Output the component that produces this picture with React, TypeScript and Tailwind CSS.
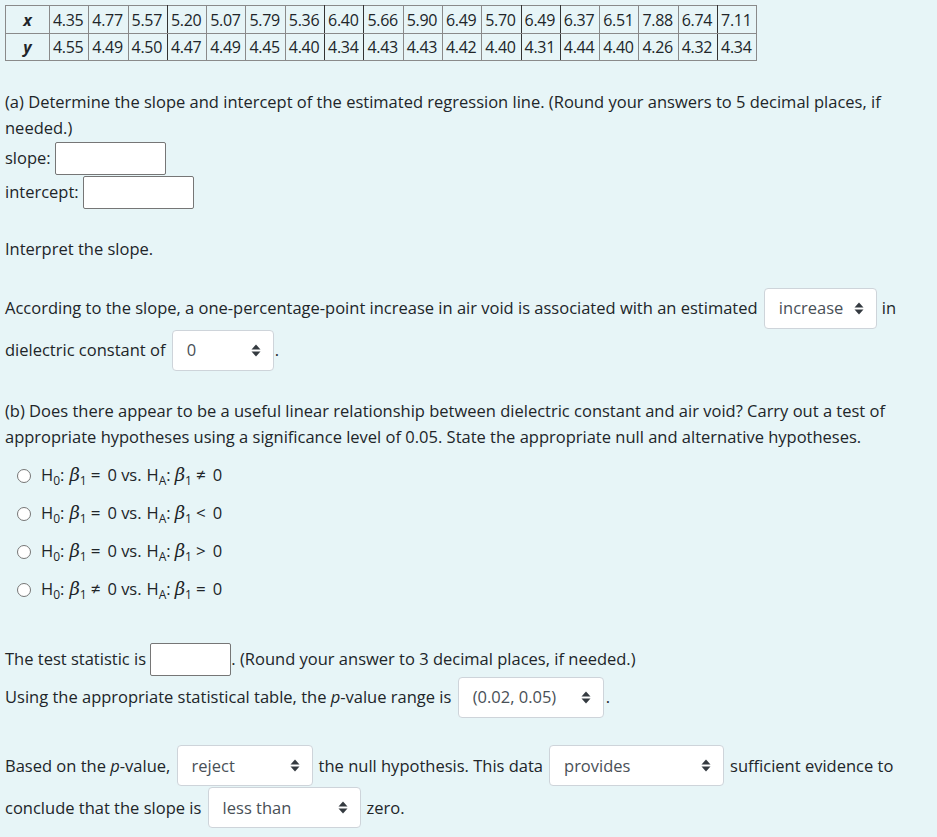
import React from "react";

const xs = ["4.35","4.77","5.57","5.20","5.07","5.79","5.36","6.40","5.66","5.90","6.49","5.70","6.49","6.37","6.51","7.88","6.74","7.11"];
const ys = ["4.55","4.49","4.50","4.47","4.49","4.45","4.40","4.34","4.43","4.43","4.42","4.40","4.31","4.44","4.40","4.26","4.32","4.34"];
const darkRight = new Set([2, 6, 7, 11, 12, 16]);

function Arrows() {
  return (
    <svg width="10" height="13" viewBox="0 0 10 13" className="shrink-0">
      <path d="M5 0.5 L9.5 5.5 L0.5 5.5 Z" fill="#343a40" />
      <path d="M0.5 7.5 L9.5 7.5 L5 12.5 Z" fill="#343a40" />
    </svg>
  );
}

function Sel({ v, cls }: { v: string; cls: string }) {
  return (
    <span
      className={
        "inline-flex items-center justify-between h-[41px] rounded-[4px] border border-[#ced4da] bg-white pl-[14px] pr-[12px] text-[#495057] " +
        cls
      }
    >
      <span>{v}</span>
      <Arrows />
    </span>
  );
}

function Inp({ cls }: { cls: string }) {
  return <span className={"inline-block h-[33px] rounded-[2px] border border-[#767676] bg-white " + cls} />;
}

function Beta() {
  return (
    <span className="inline-flex items-baseline">
      <span className="italic text-[18px]" style={{ fontFamily: '"DejaVu Serif", serif' }}>β</span>
      <span className="text-[12px] relative top-[4px]">1</span>
    </span>
  );
}

function H({ s }: { s: string }) {
  return (
    <span className="inline-flex items-baseline">
      H<span className="text-[12px] relative top-[4px]">{s}</span>
    </span>
  );
}

function Op({ c }: { c: string }) {
  return <span className="ml-[4px] mr-[7px] text-[17px]">{c}</span>;
}

function Hyp({ a, b }: { a: string; b: string }) {
  return (
    <div className="h-[38px] flex items-center">
      <span className="ml-[12px] mr-[10px] inline-block w-[14px] h-[14px] rounded-full border border-[#767676] bg-white" />
      <span className="inline-flex items-baseline whitespace-pre">
        <H s="0" />:<span className="w-[5px]" /><Beta /><Op c={a} /><span>0 vs.</span><span className="w-[5px]" /><H s="A" />:<span className="w-[4px]" /><Beta /><Op c={b} /><span>0</span>
      </span>
    </div>
  );
}

export default function App() {
  return (
    <div
      className="min-h-[837px] w-[937px] bg-[#e7f5f7] text-[#212529] text-[16.5px] leading-[26px] px-[5px] pt-[5px] overflow-hidden"
      style={{ fontFamily: '"Open Sans", "Noto Sans", sans-serif' }}
    >
      <table className="border-collapse text-[16px]">
        <tbody>
          {[{ l: "x", d: xs }, { l: "y", d: ys }].map((r, ri) => (
            <tr key={r.l} className={ri === 0 ? "h-[28px]" : "h-[27px]"}>
              <td className="w-[44px] border border-[#8a8a8a] text-center font-bold italic leading-none">{r.l}</td>
              {r.d.map((v, i) => (
                <td
                  key={i}
                  className={
                    "w-[39.3px] border border-[#8a8a8a] pl-[3px] leading-none tracking-[-0.3px] " +
                    (darkRight.has(i) ? "border-r-[#333]" : "")
                  }
                >
                  {v}
                </td>
              ))}
            </tr>
          ))}
        </tbody>
      </table>

      <div className="mt-[28px]">
        (a) Determine the slope and intercept of the estimated regression line. (Round your answers to 5 decimal places, if
        <br />
        needed.)
      </div>
      <div className="h-[34px] flex items-center">
        slope:&nbsp;<Inp cls="w-[111px]" />
      </div>
      <div className="h-[34px] flex items-center">
        intercept:&nbsp;<Inp cls="w-[111px]" />
      </div>

      <div className="mt-[27px]">Interpret the slope.</div>

      <div className="mt-[25px] h-[42px] flex items-center whitespace-nowrap">
        According to the slope, a one-percentage-point increase in air void is associated with an estimated&nbsp;
        <Sel v="increase" cls="w-[113px] ml-[2px]" />
        <span className="ml-[5px]">in</span>
      </div>
      <div className="h-[42px] flex items-center">
        dielectric constant of&nbsp;
        <Sel v="0" cls="w-[102px] ml-[2px]" />
        <span className="ml-[1px]">.</span>
      </div>

      <div className="mt-[27px]">
        (b) Does there appear to be a useful linear relationship between dielectric constant and air void? Carry out a test of
        <br />
        appropriate hypotheses using a significance level of 0.05. State the appropriate null and alternative hypotheses.
      </div>

      <div className="mt-[7px]">
        <Hyp a="=" b="≠" />
        <Hyp a="=" b="<" />
        <Hyp a="=" b=">" />
        <Hyp a="≠" b="=" />
      </div>

      <div className="mt-[32px] h-[36px] flex items-center whitespace-nowrap">
        The test statistic is&nbsp;
        <Inp cls="w-[81px]" />
        . (Round your answer to 3 decimal places, if needed.)
      </div>
      <div className="h-[40px] flex items-center whitespace-nowrap">
        Using the appropriate statistical table, the&nbsp;<i>p</i>-value range is&nbsp;
        <Sel v="(0.02, 0.05)" cls="w-[146px] ml-[2px]" />
        <span className="ml-[2px]">.</span>
      </div>

      <div className="mt-[27px] h-[43px] flex items-center whitespace-nowrap">
        Based on the&nbsp;<i>p</i>-value,&nbsp;
        <Sel v="reject" cls="w-[136px] ml-[2px]" />
        <span className="ml-[6px]">the null hypothesis. This data</span>
        <Sel v="provides" cls="w-[175px] ml-[6px]" />
        <span className="ml-[6px]">sufficient evidence to</span>
      </div>
      <div className="h-[41px] flex items-center whitespace-nowrap">
        conclude that the slope is&nbsp;
        <Sel v="less than" cls="w-[153px] ml-[2px]" />
        <span className="ml-[6px]">zero.</span>
      </div>
    </div>
  );
}
